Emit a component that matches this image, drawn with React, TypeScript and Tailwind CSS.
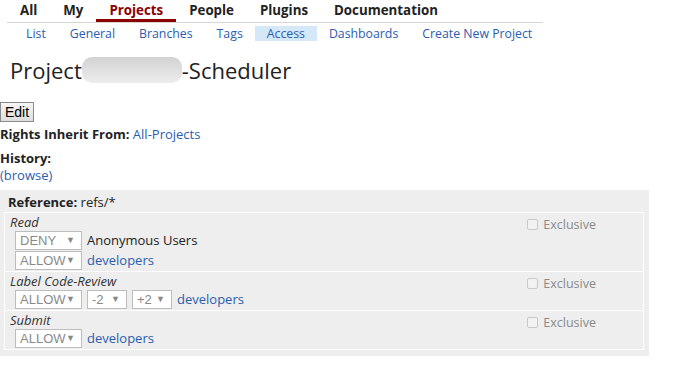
import React from "react";

const font = { fontFamily: '"Open Sans", "Noto Sans", sans-serif' };

const tabs = ["All", "My", "Projects", "People", "Plugins", "Documentation"];
const subTabs = ["List", "General", "Branches", "Tags", "Access", "Dashboards", "Create New Project"];

function Sel({ value, w }: { value: string; w: string }) {
  return (
    <span
      className={`inline-flex items-center justify-between h-[19px] ${w} border border-[#bdbdbd] bg-white px-[4px] text-[13px] text-[#8a8a8a]`}
      style={{ fontFamily: '"Liberation Sans", Arial, sans-serif' }}
    >
      <span>{value}</span>
      <span className="text-[9px] text-[#888] pr-[2px]">▼</span>
    </span>
  );
}

function Exclusive() {
  return (
    <div className="self-start flex items-center gap-[5px] text-[#8a8a8a] text-[12.5px] mr-[47px] mt-[3px]">
      <span className="w-[11px] h-[11px] border border-[#c8c8c8] rounded-[2px] bg-[#f2f2f2]" />
      <span>Exclusive</span>
    </div>
  );
}

function Rule({ children }: { children: React.ReactNode }) {
  return (
    <div className="flex items-center gap-[5px] h-[20px] pl-[10px]">{children}</div>
  );
}

function Section({
  label,
  children,
  last,
}: {
  label: string;
  children: React.ReactNode;
  last?: boolean;
}) {
  return (
    <div className={`flex justify-between ${last ? "" : "border-b border-white"}`}>
      <div className="flex flex-col">
        <div className="italic text-[13px] text-[#333] h-[18px] leading-[18px] pl-[5px]">{label}</div>
        {children}
      </div>
      <Exclusive />
    </div>
  );
}

export default function App() {
  return (
    <div className="w-[699px] h-[373px] bg-white text-[13px] text-[#222] overflow-hidden" style={font}>
      {/* top tabs */}
      <div className="ml-[7px] w-[536px] h-[23px] border-b border-[#d6d6d6] flex">
        {tabs.map((t) => (
          <div
            key={t}
            className={`px-[13px] h-[22px] leading-[21px] text-[13.3px] font-bold ${
              t === "Projects" ? "text-[#8b0000] border-b-[3px] border-[#8b0000]" : "text-[#222]"
            }`}
          >
            {t}
          </div>
        ))}
      </div>
      {/* sub tabs */}
      <div className="ml-[14px] mt-[3px] flex">
        {subTabs.map((t) => (
          <div
            key={t}
            className={`px-[12px] h-[15px] leading-[15px] text-[12.3px] text-[#2a5db0] ${
              t === "Access" ? "bg-[#d4e8f8]" : ""
            }`}
          >
            {t}
          </div>
        ))}
      </div>
      {/* title */}
      <div className="mt-[15px] pl-[10px] h-[28px] flex items-center text-[22px] text-[#222]">
        <span>Project</span>
        <span className="inline-block w-[100px] h-[26px] rounded-[10px] bg-gradient-to-b from-[#d2d2d2] to-[#ededed]" />
        <span>-Scheduler</span>
      </div>
      {/* edit */}
      <div className="mt-[18px]">
        <button
          className="h-[20px] px-[4px] border border-[#8a8a8a] bg-gradient-to-b from-[#f6f6f6] to-[#dedede] text-[14px] text-black leading-[18px]"
          style={{ fontFamily: '"Liberation Sans", Arial, sans-serif' }}
        >
          Edit
        </button>
      </div>
      <div className="mt-[2px] h-[18px] leading-[18px]">
        <span className="font-bold">Rights Inherit From:</span>{" "}
        <span className="text-[#2a5db0]">All-Projects</span>
      </div>
      <div className="mt-[6px] h-[18px] leading-[18px] font-bold">History:</div>
      <div className="h-[17px] leading-[17px] text-[#2a5db0]">(browse)</div>
      {/* access panel */}
      <div className="mt-[6px] w-[649px] bg-[#eeeeee] pb-[6px]">
        <div className="h-[22px] leading-[24px] pl-[8px]">
          <span className="font-bold">Reference:</span> <span>refs/*</span>
        </div>
        <div className="ml-[4px] w-[640px] border border-white">
          <Section label="Read">
            <Rule>
              <Sel value="DENY" w="w-[67px]" />
              <span>Anonymous Users</span>
            </Rule>
            <Rule>
              <Sel value="ALLOW" w="w-[67px]" />
              <span className="text-[#2a5db0]">developers</span>
            </Rule>
          </Section>
          <Section label="Label Code-Review">
            <Rule>
              <Sel value="ALLOW" w="w-[67px]" />
              <Sel value="-2" w="w-[40px]" />
              <Sel value="+2" w="w-[40px]" />
              <span className="text-[#2a5db0]">developers</span>
            </Rule>
          </Section>
          <Section label="Submit" last>
            <Rule>
              <Sel value="ALLOW" w="w-[67px]" />
              <span className="text-[#2a5db0]">developers</span>
            </Rule>
          </Section>
        </div>
      </div>
    </div>
  );
}
